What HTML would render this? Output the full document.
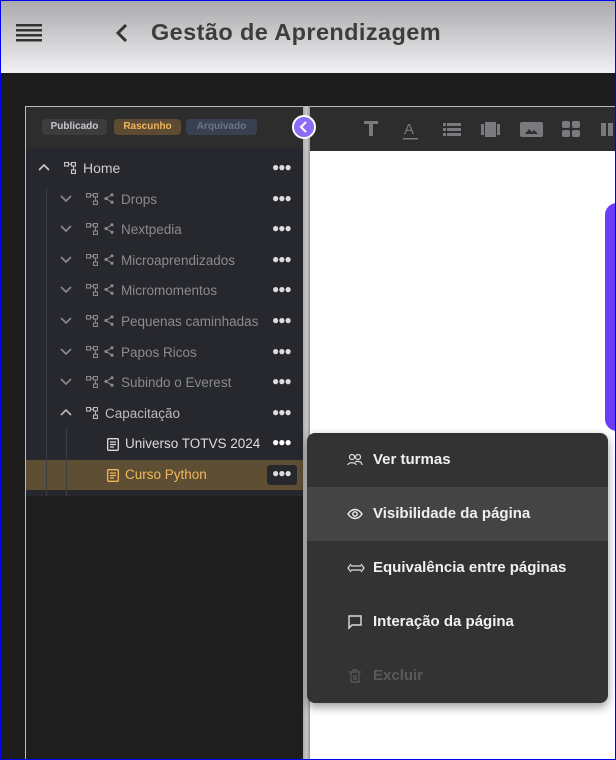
<!DOCTYPE html>
<html><head><meta charset="utf-8"><style>
*{margin:0;padding:0;box-sizing:border-box}
body{width:616px;height:760px;overflow:hidden;background:#1d1d1d;font-family:"Liberation Sans",sans-serif;position:relative}
.frame{position:absolute;inset:0;border:1px solid #0000ee;z-index:50;pointer-events:none}
.hdr{position:absolute;left:0;top:0;width:616px;height:73px;background:linear-gradient(#a9a9ab,#f1f1f5)}
.hdr .t{position:absolute;left:151px;top:19px;font-size:23.5px;color:#3d3d3d;font-weight:bold;letter-spacing:0.4px}
.side{position:absolute;left:25px;top:106px;width:279px;height:654px;background:#1e1e1e;border-left:1px solid #bbb;border-top:1px solid #bbb}
.tags{height:41px;background:#2d2d2d;position:relative}
.tag{position:absolute;top:12px;height:16px;border-radius:4px;font-size:10px;line-height:16px;text-align:center;font-weight:bold}
.tree{background:#27282d;height:348px;position:relative}
.row{position:absolute;left:0;width:277px;height:30px;font-size:13.5px;color:#8a8b90}
.row span.n{position:absolute;top:7px}
.row svg{position:absolute}
.dots{position:absolute;left:246px;top:6px;color:#ddd;font-size:12px;letter-spacing:-1px;font-weight:bold}
.vline{position:absolute;width:1px;background:#3d3e44}
.div{position:absolute;left:303px;top:106px;width:7px;height:654px;background:linear-gradient(90deg,#aaa,#c8c8c8,#999)}
.tb{position:absolute;left:310px;top:106px;width:306px;height:45px;background:#2d2d2d;border-top:1px solid #bbb}
.content{position:absolute;left:310px;top:151px;width:306px;height:609px;background:#fff}
.purp{position:absolute;left:605px;top:203px;width:20px;height:228px;background:#6b3df5;border-radius:12px 0 0 12px}
.menu{position:absolute;left:307px;top:433px;width:301px;height:270px;background:#333;border-radius:8px;box-shadow:0 4px 10px rgba(0,0,0,.4);overflow:hidden}
.mi{height:54px;position:relative;color:#f0f0f0;font-size:15px;font-weight:bold}
.mi span{position:absolute;left:66px;top:18px}
.mi svg{position:absolute;left:40px;top:19px}
</style></head><body>
<svg width="0" height="0" style="position:absolute">
<defs>
<g id="dn"><path d="M1 1l5 5 5-5" stroke="currentColor" stroke-width="1.6" fill="none"/></g>
<g id="up"><path d="M1 6l5-5 5 5" stroke="currentColor" stroke-width="1.6" fill="none"/></g>
<g id="hi" fill="none" stroke="currentColor" stroke-width="1.1"><rect x="0.5" y="0.5" width="4" height="3.5"/><rect x="7.5" y="0.5" width="4" height="3.5"/><rect x="7.5" y="8" width="4" height="3.5"/><path d="M4.5 2.2h3M9.5 4v4"/></g>
<g id="sh" fill="currentColor"><circle cx="8" cy="1.8" r="1.6"/><circle cx="2" cy="5.5" r="1.6"/><circle cx="8" cy="9.2" r="1.6"/><path d="M8 1.8L2 5.5 8 9.2" stroke="currentColor" fill="none" stroke-width="1"/></g>
<g id="doc" fill="none" stroke="currentColor" stroke-width="1.3"><rect x="0.7" y="0.7" width="10.6" height="11.6" rx="1"/><path d="M3 4h6M3 6.5h6M3 9h4"/></g>
</defs></svg>
<div class="hdr">
<svg style="position:absolute;left:16px;top:24px" width="26" height="18"><g fill="#333"><rect x="0" y="0" width="26" height="2.5"/><rect x="0" y="5" width="26" height="2.5"/><rect x="0" y="10" width="26" height="2.5"/><rect x="0" y="15" width="26" height="2.5"/></g></svg>
<svg style="position:absolute;left:115px;top:23px" width="14" height="20"><path d="M11 2L3 10l8 8" stroke="#333" stroke-width="3" fill="none"/></svg>
<div class="t">Gestão de Aprendizagem</div>
</div>
<div class="side">
<div class="tags">
<div class="tag" style="left:16px;width:65px;background:#3c3c3e;color:#c8c8cc">Publicado</div>
<div class="tag" style="left:88px;width:67px;background:#5d4c33;color:#f0b75c">Rascunho</div>
<div class="tag" style="left:160px;width:71px;background:#394150;color:#6c7585">Arquivado</div>
</div>
<div class="tree">
<div class="vline" style="left:20px;top:40px;height:308px"></div>
<div class="vline" style="left:40px;top:280px;height:68px"></div>
<div class="row" style="top:6px;color:#ccc"><svg style="left:12px;top:10px" width="12" height="8"><use href="#up"/></svg><svg style="left:38px;top:8px" width="12" height="12"><use href="#hi"/></svg><span class="n" style="left:57px;font-size:14px;top:6px">Home</span><span class="dots">●●●</span></div>
<div class="row" style="top:37px"><svg style="left:34px;top:10px" width="12" height="8"><use href="#dn"/></svg><svg style="left:60px;top:8px" width="12" height="12"><use href="#hi"/></svg><svg style="left:78px;top:8px" width="10" height="11"><use href="#sh"/></svg><span class="n" style="left:95px">Drops</span><span class="dots">●●●</span></div>
<div class="row" style="top:67px"><svg style="left:34px;top:10px" width="12" height="8"><use href="#dn"/></svg><svg style="left:60px;top:8px" width="12" height="12"><use href="#hi"/></svg><svg style="left:78px;top:8px" width="10" height="11"><use href="#sh"/></svg><span class="n" style="left:95px">Nextpedia</span><span class="dots">●●●</span></div>
<div class="row" style="top:98px"><svg style="left:34px;top:10px" width="12" height="8"><use href="#dn"/></svg><svg style="left:60px;top:8px" width="12" height="12"><use href="#hi"/></svg><svg style="left:78px;top:8px" width="10" height="11"><use href="#sh"/></svg><span class="n" style="left:95px">Microaprendizados</span><span class="dots">●●●</span></div>
<div class="row" style="top:128px"><svg style="left:34px;top:10px" width="12" height="8"><use href="#dn"/></svg><svg style="left:60px;top:8px" width="12" height="12"><use href="#hi"/></svg><svg style="left:78px;top:8px" width="10" height="11"><use href="#sh"/></svg><span class="n" style="left:95px">Micromomentos</span><span class="dots">●●●</span></div>
<div class="row" style="top:159px"><svg style="left:34px;top:10px" width="12" height="8"><use href="#dn"/></svg><svg style="left:60px;top:8px" width="12" height="12"><use href="#hi"/></svg><svg style="left:78px;top:8px" width="10" height="11"><use href="#sh"/></svg><span class="n" style="left:95px">Pequenas caminhadas</span><span class="dots">●●●</span></div>
<div class="row" style="top:190px"><svg style="left:34px;top:10px" width="12" height="8"><use href="#dn"/></svg><svg style="left:60px;top:8px" width="12" height="12"><use href="#hi"/></svg><svg style="left:78px;top:8px" width="10" height="11"><use href="#sh"/></svg><span class="n" style="left:95px">Papos Ricos</span><span class="dots">●●●</span></div>
<div class="row" style="top:220px"><svg style="left:34px;top:10px" width="12" height="8"><use href="#dn"/></svg><svg style="left:60px;top:8px" width="12" height="12"><use href="#hi"/></svg><svg style="left:78px;top:8px" width="10" height="11"><use href="#sh"/></svg><span class="n" style="left:95px">Subindo o Everest</span><span class="dots">●●●</span></div>
<div class="row" style="top:251px;color:#bbb"><svg style="left:34px;top:10px" width="12" height="8"><use href="#up"/></svg><svg style="left:60px;top:8px" width="12" height="12"><use href="#hi"/></svg><span class="n" style="left:79px">Capacitação</span><span class="dots">●●●</span></div>
<div class="row" style="top:281px;color:#ddd"><svg style="left:81px;top:9px" width="13" height="13"><use href="#doc"/></svg><span class="n" style="left:99px">Universo TOTVS 2024</span><span class="dots" style="color:#fff">●●●</span></div>
<div class="row" style="top:312px;background:#5e4f34;color:#f0b75c"><div class="vline" style="left:20px;top:0;height:30px"></div><div class="vline" style="left:40px;top:0;height:30px"></div><svg style="left:81px;top:9px" width="13" height="13"><use href="#doc"/></svg><span class="n" style="left:99px">Curso Python</span><div style="position:absolute;left:241px;top:5px;width:30px;height:20px;background:#27282d;border-radius:3px"></div><span class="dots" style="color:#ddd">●●●</span></div>
</div>
</div>
<div class="div"></div>
<div style="position:absolute;left:292px;top:115px;width:24px;height:24px;border-radius:50%;background:#8b6cf5;border:2px solid #fff;z-index:5"><svg width="20" height="20"><path d="M12 5l-5 5 5 5" stroke="#fff" stroke-width="2" fill="none"/></svg></div>
<div class="tb">
<svg width="306" height="45"><g fill="#7a7a7e">
<rect x="54" y="14" width="14" height="3"/><rect x="59" y="14" width="4" height="15"/>
<text x="94" y="27" font-size="15" font-family="Liberation Sans">A</text><rect x="93" y="31" width="15" height="1.5"/>
<rect x="133" y="16" width="3" height="3"/><rect x="137" y="16" width="14" height="3"/><rect x="133" y="21" width="3" height="3"/><rect x="137" y="21" width="14" height="3"/><rect x="133" y="26" width="3" height="3"/><rect x="137" y="26" width="14" height="3"/>
<rect x="171" y="17" width="3" height="11"/><rect x="175" y="15" width="11" height="15"/><rect x="187" y="17" width="3" height="11"/>
<rect x="210" y="15" width="23" height="15" rx="2"/>
<rect x="252" y="14" width="8" height="7" rx="2"/><rect x="262" y="14" width="8" height="7" rx="2"/><rect x="252" y="23" width="8" height="7" rx="2"/><rect x="262" y="23" width="8" height="7" rx="2"/>
<rect x="291" y="16" width="5" height="13"/><rect x="298" y="16" width="5" height="13"/>
</g><path d="M215 27l4-5 3 3 2-2 4 4z" fill="#2d2d2d"/></svg>
</div>
<div class="content"></div>
<div class="purp"></div>
<div class="menu">
<div class="mi"><svg width="16" height="16" fill="none" stroke="#ddd" stroke-width="1.2"><circle cx="5" cy="5" r="2.5"/><circle cx="11" cy="5" r="2.5"/><path d="M1 13c0-3 8-3 8 0M8 10c2-1 7-1 7 3"/></svg><span>Ver turmas</span></div>
<div class="mi" style="background:#444"><svg width="16" height="16" fill="none" stroke="#eee" stroke-width="1.4"><path d="M1 8c4-6 10-6 14 0c-4 6-10 6-14 0z"/><circle cx="8" cy="8" r="2.2"/></svg><span>Visibilidade da página</span></div>
<div class="mi"><svg width="18" height="16" fill="none" stroke="#ddd" stroke-width="1.3"><path d="M4 4L1 8l3 4M14 4l3 4-3 4M4 6h10M4 10h10"/></svg><span>Equivalência entre páginas</span></div>
<div class="mi"><svg width="16" height="16" fill="none" stroke="#ddd" stroke-width="1.4"><path d="M2 2h12v9H5l-3 3z"/></svg><span>Interação da página</span></div>
<div class="mi" style="color:#5a5a5a"><svg width="16" height="16" fill="none" stroke="#555" stroke-width="1.4"><path d="M2 4h12M6 4V2h4v2M4 4v10h8V4M7 7v5M9 7v5"/></svg><span>Excluir</span></div>
</div>
<div class="frame"></div>
</body></html>
